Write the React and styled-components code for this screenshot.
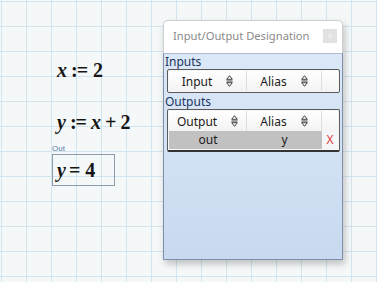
import React from "react";
import styled, { createGlobalStyle } from "styled-components";

const Global = createGlobalStyle`
  html, body { margin: 0; padding: 0; }
  body { width: 377px; height: 282px; overflow: hidden; }
`;

const Canvas = styled.div`
  position: relative;
  width: 377px;
  height: 282px;
  background-color: #f5f8f8;
  background-image:
    linear-gradient(to right, #d3e4ee 1px, transparent 1px),
    linear-gradient(to bottom, #d3e4ee 1px, transparent 1px);
  background-size: 25px 25px;
  background-position: 1px 1px;
  overflow: hidden;
`;

const MathRegion = styled.div`
  position: absolute;
  left: ${(p) => p.$x}px;
  top: ${(p) => p.$y}px;
  display: flex;
  flex-direction: column;
  align-items: flex-start;
`;

const MathLine = styled.div`
  display: flex;
  align-items: baseline;
  font-family: "Liberation Serif", "Times New Roman", serif;
  font-size: 20px;
  line-height: 20px;
  font-weight: 600;
  color: #151515;
  white-space: nowrap;
`;

const Var = styled.span`
  font-style: italic;
`;

const Op = styled.span`
  margin: 0 ${(p) => p.$m ?? 4}px 0 ${(p) => p.$ml ?? p.$m ?? 4}px;
`;

const Colon = styled.span`
  margin-left: 4px;
  margin-right: -1px;
`;

const OutLabel = styled.div`
  font-family: "Liberation Sans", Arial, sans-serif;
  font-size: 8px;
  line-height: 9px;
  color: #5b80a8;
  margin-bottom: 1px;
`;

const OutBox = styled.div`
  box-sizing: border-box;
  width: 63px;
  height: 32px;
  border: 1px solid #8e9cac;
  padding: 5px 0 0 4px;
`;

const Dialog = styled.div`
  position: absolute;
  left: 163px;
  top: 20px;
  width: 180px;
  height: 240px;
  display: flex;
  flex-direction: column;
  font-family: "Noto Sans", "Open Sans", sans-serif;
  box-shadow: 2px 4px 7px rgba(0, 0, 0, 0.22);
  border-radius: 5px 5px 0 0;
`;

const TitleBar = styled.div`
  box-sizing: border-box;
  height: 33px;
  display: flex;
  align-items: center;
  justify-content: space-between;
  padding: 0 5px 3px 9px;
  background: #ffffff;
  border: 1px solid #cfcfcf;
  border-bottom: none;
  border-radius: 5px 5px 0 0;
`;

const Title = styled.span`
  font-size: 11.2px;
  color: #8a8a8a;
  white-space: nowrap;
`;

const CloseBtn = styled.div`
  width: 14px;
  height: 14px;
  margin-top: 1px;
  background: #e2e2e2;
  color: #f4f4f4;
  font-size: 9px;
  line-height: 14px;
  text-align: center;
`;

const Body = styled.div`
  flex: 1;
  display: flex;
  flex-direction: column;
  background: linear-gradient(to bottom, #dbe8f7, #c8d9f0);
  border: 1px solid #7f8fa9;
  border-top: 1px solid #a9bbd3;
  padding: 0 1px;
`;

const SectionLabel = styled.div`
  font-size: 12px;
  line-height: 14px;
  color: #1d3560;
  margin-top: ${(p) => p.$mt || 0}px;
`;

const Table = styled.div`
  margin: 0 1px 0 2px;
  border: 1px solid #5a5a5a;
  border-bottom: ${(p) => (p.$thick ? "2px solid #333" : "1px solid #5a5a5a")};
  border-radius: 2px;
  background: #f4f6f8;
  padding: 1px;
  display: flex;
  flex-direction: column;
`;

const Row = styled.div`
  display: grid;
  grid-template-columns: 78px 75px 1fr;
  height: ${(p) => p.$h}px;
`;

const HeadCell = styled.div`
  display: flex;
  align-items: center;
  justify-content: center;
  gap: 14px;
  background: linear-gradient(to bottom, #ffffff, #f3f3f3);
  border-right: 1px solid #dedede;
  font-size: 12px;
  color: #1a1a1a;
  &:last-child { border-right: none; }
`;

const DataCell = styled.div`
  display: flex;
  align-items: center;
  justify-content: center;
  background: ${(p) => (p.$sel ? "#c1c1c1" : "transparent")};
  font-size: 12px;
  color: ${(p) => (p.$red ? "#e0393e" : "#1a1a1a")};
  padding-bottom: 1px;
`;

const SortIcon = () => (
  <svg width="7" height="12" viewBox="0 0 7 12" fill="none" stroke="#2a2a2a" strokeWidth="0.9">
    <path d="M3.5 0.7 L6.3 4.3 L0.7 4.3 Z" />
    <path d="M0.5 6 H6.5" />
    <path d="M0.7 7.7 L6.3 7.7 L3.5 11.3 Z" />
  </svg>
);

function Header({ a, b, h }) {
  return (
    <Row $h={h}>
      <HeadCell>
        <span>{a}</span>
        <SortIcon />
      </HeadCell>
      <HeadCell>
        <span>{b}</span>
        <SortIcon />
      </HeadCell>
      <HeadCell />
    </Row>
  );
}

export default function App() {
  return (
    <>
      <Global />
      <Canvas>
        <MathRegion $x={57} $y={60}>
          <MathLine>
            <Var>x</Var>
            <Colon>:</Colon>
            <Op $ml={0} $m={5}>=</Op>
            <span>2</span>
          </MathLine>
        </MathRegion>
        <MathRegion $x={57} $y={112}>
          <MathLine>
            <Var>y</Var>
            <Colon>:</Colon>
            <Op $ml={0} $m={4}>=</Op>
            <Var>x</Var>
            <Op $m={4}>+</Op>
            <span>2</span>
          </MathLine>
        </MathRegion>
        <MathRegion $x={52} $y={144}>
          <OutLabel>Out</OutLabel>
          <OutBox>
            <MathLine>
              <Var>y</Var>
              <Op $m={5} $ml={3}>=</Op>
              <span>4</span>
            </MathLine>
          </OutBox>
        </MathRegion>

        <Dialog>
          <TitleBar>
            <Title>Input/Output Designation</Title>
            <CloseBtn>×</CloseBtn>
          </TitleBar>
          <Body>
            <SectionLabel $mt={1}>Inputs</SectionLabel>
            <Table>
              <Header a="Input" b="Alias" h={20} />
            </Table>
            <SectionLabel $mt={2}>Outputs</SectionLabel>
            <Table $thick>
              <Header a="Output" b="Alias" h={20} />
              <Row $h={18}>
                <DataCell $sel>out</DataCell>
                <DataCell $sel>y</DataCell>
                <DataCell $red>X</DataCell>
              </Row>
            </Table>
          </Body>
        </Dialog>
      </Canvas>
    </>
  );
}
